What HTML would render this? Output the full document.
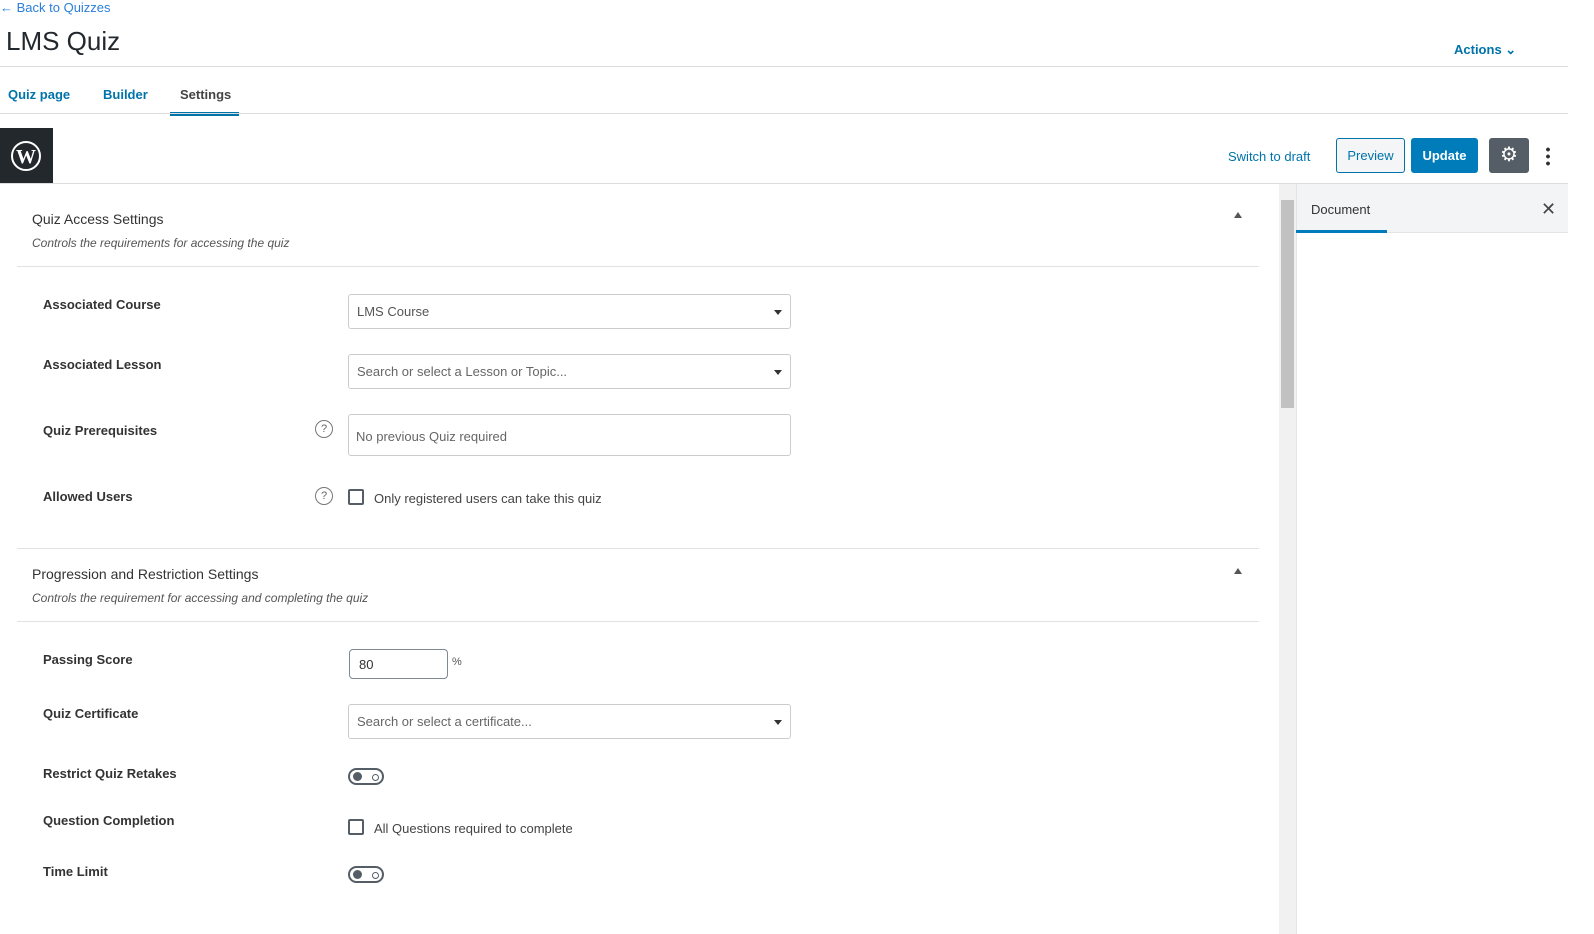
<!DOCTYPE html>
<html><head><meta charset="utf-8"><style>
*{box-sizing:border-box;margin:0;padding:0}
body{width:1594px;height:934px;overflow:hidden;background:#fff;font-family:"Liberation Sans",sans-serif;color:#1e1e1e;position:relative;font-size:13px}
.a{position:absolute}
.lbl{position:absolute;left:43px;font-weight:bold;font-size:13px;color:#333}
.sel{position:absolute;left:348px;width:443px;height:35px;border:1px solid #ccc;border-radius:3px;color:#666;font-size:13px;padding:9px 8px}
.sel:after{content:"";position:absolute;right:8px;top:15px;border:4px solid transparent;border-top:5px solid #333}
.q{position:absolute;left:315px;width:18px;height:18px;border:1px solid #777;border-radius:50%;font-size:11px;text-align:center;line-height:16px;color:#666}
.cb{position:absolute;left:348px;width:16px;height:16px;border:2px solid #555d66;border-radius:2px}
.tg{position:absolute;left:348px;width:36px;height:17px;border:2px solid #555d66;border-radius:9px}
.tg:before{content:"";position:absolute;left:3px;top:2px;width:9px;height:9px;border-radius:50%;background:#555d66}
.tg:after{content:"";position:absolute;left:22px;top:4px;width:5px;height:5px;border-radius:50%;border:1.5px solid #555d66}
.sh{position:absolute;left:32px;font-size:14px;color:#333}
.sd{position:absolute;left:32px;font-size:12px;font-style:italic;color:#555}
.tri{position:absolute;left:1234px;border:4px solid transparent;border-bottom:6px solid #555}
</style></head><body>
<div class="a" style="left:0;top:0;font-size:13px;color:#2b7fd9">← Back to Quizzes</div>
<div class="a" style="left:6px;top:26px;font-size:26px;color:#23282d">LMS Quiz</div>
<div class="a" style="left:1454px;top:42px;font-size:13px;font-weight:bold;color:#0073aa">Actions ⌄</div>
<div class="a" style="left:0;top:66px;width:1568px;height:1px;background:#ddd"></div>
<div class="a" style="left:8px;top:87px;font-weight:bold;color:#0073aa">Quiz page</div>
<div class="a" style="left:103px;top:87px;font-weight:bold;color:#0073aa">Builder</div>
<div class="a" style="left:180px;top:87px;font-weight:bold;color:#444">Settings</div>
<div class="a" style="left:170px;top:112px;width:69px;height:4px;background:#0073aa"></div>
<div class="a" style="left:0;top:113px;width:1568px;height:1px;background:#ddd"></div>
<div class="a" style="left:0;top:128px;width:53px;height:55px;background:#23282d"></div>
<svg class="a" style="left:10px;top:140px" width="32" height="32" viewBox="0 0 32 32"><circle cx="16" cy="16" r="14" fill="none" stroke="#fff" stroke-width="2"/><text x="16" y="23" font-family="Liberation Serif" font-size="20" font-weight="bold" fill="#fff" text-anchor="middle">W</text></svg>
<div class="a" style="left:0;top:183px;width:1568px;height:1px;background:#ddd"></div>
<div class="a" style="left:1228px;top:149px;color:#0073aa">Switch to draft</div>
<div class="a" style="left:1336px;top:138px;width:69px;height:35px;border:1px solid #0073aa;border-radius:3px;background:#f3f5f6;color:#0073aa;text-align:center;line-height:33px">Preview</div>
<div class="a" style="left:1411px;top:138px;width:67px;height:35px;background:#007cba;border-radius:3px;color:#fff;text-align:center;line-height:35px;font-weight:bold">Update</div>
<div class="a" style="left:1489px;top:138px;width:40px;height:35px;background:#555d66;border-radius:3px;color:#fff;text-align:center;line-height:35px;font-size:20px">⚙</div>
<div class="a" style="left:1546px;top:146px;width:4px;height:20px;background:radial-gradient(circle,#333 1.8px,transparent 2px) 0 0/4px 7px"></div>
<div class="a" style="left:1279px;top:184px;width:17px;height:750px;background:#f1f1f1"></div>
<div class="a" style="left:1281px;top:200px;width:13px;height:208px;background:#c1c1c1"></div>
<div class="a" style="left:1296px;top:184px;width:272px;height:750px;background:#fff;border-left:1px solid #e2e4e7"></div>
<div class="a" style="left:1297px;top:184px;width:271px;height:49px;background:#f3f4f5;border-bottom:1px solid #e2e4e7"></div>
<div class="a" style="left:1311px;top:202px;color:#333">Document</div>
<div class="a" style="left:1296px;top:230px;width:91px;height:3px;background:#007cba"></div>
<div class="a" style="left:1541px;top:199px;font-size:18px;color:#444">✕</div>

<div class="sh" style="top:211px">Quiz Access Settings</div>
<div class="sd" style="top:236px">Controls the requirements for accessing the quiz</div>
<div class="tri" style="top:208px"></div>
<div class="a" style="left:17px;top:266px;width:1242px;height:1px;background:#e2e2e2"></div>
<div class="lbl" style="top:297px">Associated Course</div>
<div class="sel" style="top:294px;color:#555">LMS Course</div>
<div class="lbl" style="top:357px">Associated Lesson</div>
<div class="sel" style="top:354px">Search or select a Lesson or Topic...</div>
<div class="lbl" style="top:423px">Quiz Prerequisites</div>
<div class="q" style="top:420px">?</div>
<div class="a" style="left:348px;top:414px;width:443px;height:42px;border:1px solid #ccc;border-radius:3px;color:#666;padding:14px 7px">No previous Quiz required</div>
<div class="lbl" style="top:489px">Allowed Users</div>
<div class="q" style="top:487px">?</div>
<div class="cb" style="top:489px"></div>
<div class="a" style="left:374px;top:491px;color:#444">Only registered users can take this quiz</div>
<div class="a" style="left:17px;top:548px;width:1242px;height:1px;background:#e2e2e2"></div>

<div class="sh" style="top:566px">Progression and Restriction Settings</div>
<div class="sd" style="top:591px">Controls the requirement for accessing and completing the quiz</div>
<div class="tri" style="top:564px"></div>
<div class="a" style="left:17px;top:621px;width:1242px;height:1px;background:#e2e2e2"></div>
<div class="lbl" style="top:652px">Passing Score</div>
<div class="a" style="left:349px;top:649px;width:99px;height:30px;border:1px solid #7e8993;border-radius:4px;padding:7px 9px;color:#333">80</div>
<div class="a" style="left:452px;top:656px;font-size:11px;color:#555">%</div>
<div class="lbl" style="top:706px">Quiz Certificate</div>
<div class="sel" style="top:704px">Search or select a certificate...</div>
<div class="lbl" style="top:766px">Restrict Quiz Retakes</div>
<div class="tg" style="top:768px"></div>
<div class="lbl" style="top:813px">Question Completion</div>
<div class="cb" style="top:819px"></div>
<div class="a" style="left:374px;top:821px;color:#444">All Questions required to complete</div>
<div class="lbl" style="top:864px">Time Limit</div>
<div class="tg" style="top:866px"></div>
</body></html>
